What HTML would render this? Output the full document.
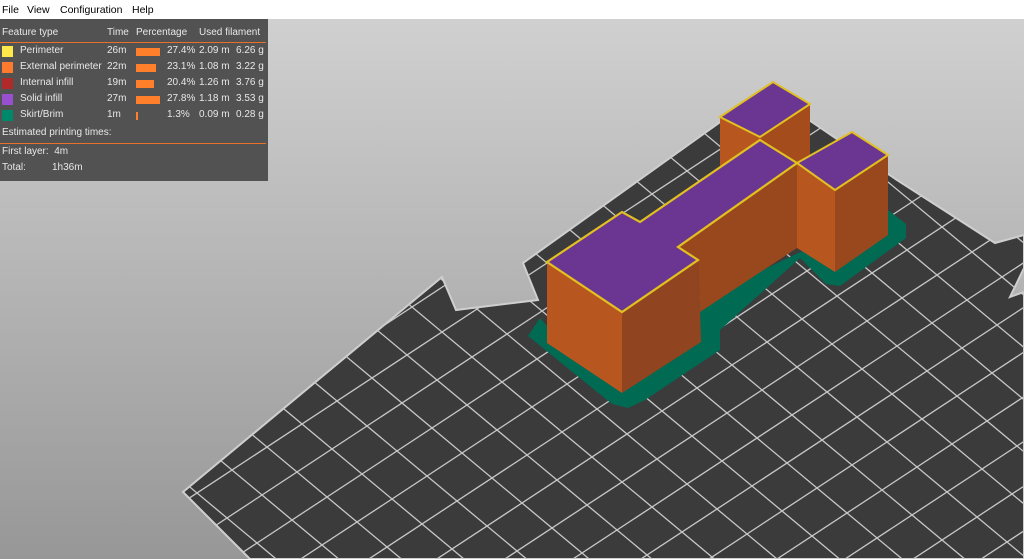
<!DOCTYPE html>
<html style="overflow:hidden"><head><meta charset="utf-8"><style>
*{margin:0;padding:0;box-sizing:border-box}
html,body{width:1024px;height:559px;overflow:hidden}
body{font-family:"Liberation Sans",sans-serif;position:relative;background:#aaa}
#menu{position:absolute;left:0;top:0;width:1024px;height:19px;background:#fff;font-size:10.5px;color:#000}
#menu span{position:absolute;top:4px}
#panel{position:absolute;left:0;top:19px;width:268px;height:162px;background:#525252;color:#e8e8e8;font-size:10px;overflow:hidden}
#panel div{position:absolute;white-space:nowrap}
.sw{width:11px;height:11px}
.bar{height:8px;background:#ff7f2a}
.hl{height:1px;background:#e8702a;left:0;width:266px}
</style></head><body>
<svg width="1024" height="559" viewBox="0 0 1024 559" style="position:absolute;left:0;top:0;overflow:hidden;display:block">
<defs>
<linearGradient id="bg" x1="0" y1="0" x2="0" y2="1">
<stop offset="0" stop-color="#d2d2d2"/><stop offset="1" stop-color="#979797"/></linearGradient>
<clipPath id="bc"><polygon points="183,492 442,277 456,310 538,300 523,263 765,90 897,180 995,243 1024,235 1024,268 1010,297 1024,292 1024,559 250,559"/></clipPath>
</defs>
<rect width="1024" height="559" fill="url(#bg)"/>
<polygon points="183,492 442,277 456,310 538,300 523,263 765,90 897,180 995,243 1024,235 1024,268 1010,297 1024,292 1024,559 250,559" fill="#3b3b3b" stroke="#cfcfcf" stroke-width="2"/>
<g id="grid" clip-path="url(#bc)" stroke="#c8c8c8" stroke-width="1.3"></g>
<polygon points="540,318 528,336 612,404 628,408 645,400 720,350 720,330 800,258 826,284 840,286 906,238 906,224 888,210 700,300 547,326" fill="#006a52"/>
<polygon points="720,117 773,82 810,104 810,165 760,160 720,168" fill="#a44c1c"/>
<polygon points="720,117 760,137 760,165 720,168" fill="#b8561f"/>
<polygon points="720,117 773,82 810,104 760,137" fill="#6a3691" stroke="#e2c020" stroke-width="2"/>
<polygon points="797,163 835,190 835,272 797,248" fill="#b8561f"/>
<polygon points="835,190 888,155 888,235 835,272" fill="#99481d"/>
<polygon points="797,163 852,132 888,155 835,190" fill="#6a3691" stroke="#e2c020" stroke-width="2"/>
<polygon points="678,247 797,163 797,248 700,312 698,260" fill="#99481d"/>
<polygon points="547,262 622,312 622,393 547,343" fill="#b8561f"/>
<polygon points="622,312 698,260 700,312 701,342 622,393" fill="#914420"/>
<polygon points="547,262 622,212 640,222 760,140 797,163 678,247 698,260 622,312" fill="#6a3691" stroke="#e2c020" stroke-width="2.2"/>
</svg>
<script>
(function(){var g=document.getElementById('grid'),s='';
var px=297,py=472,ux=35,uy=-23,vx=30,vy=25;
for(var k=-40;k<=40;k++){
 var ax=px+k*vx,ay=py+k*vy;
 s+='<line x1="'+(ax-40*ux)+'" y1="'+(ay-40*uy)+'" x2="'+(ax+40*ux)+'" y2="'+(ay+40*uy)+'"/>';
 var bx=px+k*ux,by=py+k*uy;
 s+='<line x1="'+(bx-40*vx)+'" y1="'+(by-40*vy)+'" x2="'+(bx+40*vx)+'" y2="'+(by+40*vy)+'"/>';
}
g.innerHTML=s;})();
</script>
<div id="menu"><span style="left:2px">File</span><span style="left:27px">View</span><span style="left:60px">Configuration</span><span style="left:132px">Help</span></div>
<div id="panel">
<div style="left:2px;top:8px">Feature type</div><div style="left:107px;top:8px">Time</div><div style="left:136px;top:8px">Percentage</div><div style="left:199px;top:8px">Used filament</div>
<div class="hl" style="top:23px"></div>
<div class="sw" style="left:2px;top:27px;background:#ffe84a"></div><div style="left:20px;top:26px">Perimeter</div><div style="left:107px;top:26px">26m</div><div class="bar" style="left:136px;top:29px;width:24px"></div><div style="left:167px;top:26px">27.4%</div><div style="left:199px;top:26px">2.09 m</div><div style="left:236px;top:26px">6.26 g</div>
<div class="sw" style="left:2px;top:43px;background:#ff7a2f"></div><div style="left:20px;top:42px">External perimeter</div><div style="left:107px;top:42px">22m</div><div class="bar" style="left:136px;top:45px;width:20px"></div><div style="left:167px;top:42px">23.1%</div><div style="left:199px;top:42px">1.08 m</div><div style="left:236px;top:42px">3.22 g</div>
<div class="sw" style="left:2px;top:59px;background:#b02a2a"></div><div style="left:20px;top:58px">Internal infill</div><div style="left:107px;top:58px">19m</div><div class="bar" style="left:136px;top:61px;width:18px"></div><div style="left:167px;top:58px">20.4%</div><div style="left:199px;top:58px">1.26 m</div><div style="left:236px;top:58px">3.76 g</div>
<div class="sw" style="left:2px;top:75px;background:#9950d0"></div><div style="left:20px;top:74px">Solid infill</div><div style="left:107px;top:74px">27m</div><div class="bar" style="left:136px;top:77px;width:24px"></div><div style="left:167px;top:74px">27.8%</div><div style="left:199px;top:74px">1.18 m</div><div style="left:236px;top:74px">3.53 g</div>
<div class="sw" style="left:2px;top:91px;background:#00886a"></div><div style="left:20px;top:90px">Skirt/Brim</div><div style="left:107px;top:90px">1m</div><div class="bar" style="left:136px;top:93px;width:2px"></div><div style="left:167px;top:90px">1.3%</div><div style="left:199px;top:90px">0.09 m</div><div style="left:236px;top:90px">0.28 g</div>
<div style="left:2px;top:108px">Estimated printing times:</div>
<div class="hl" style="top:124px"></div>
<div style="left:2px;top:127px">First layer:&nbsp; 4m</div>
<div style="left:2px;top:143px">Total:</div><div style="left:52px;top:143px">1h36m</div>
</div>
</body></html>
